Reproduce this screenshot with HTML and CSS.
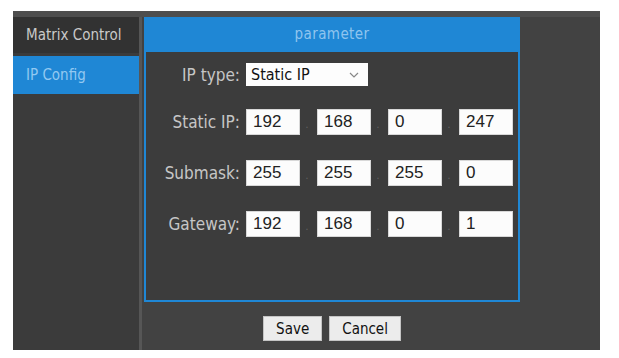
FILE: index.html
```html
<!DOCTYPE html>
<html>
    <head>
        <meta charset="UTF-8" />
        <meta name="viewport" content="width=device-width, initial-scale=1.0" />
        <title>IP Config</title>
        <link rel="stylesheet" href="styles.css">
    </head>
    <body>
        <div class="app">
            <div class="sidebar">
                <div class="navItem">Matrix Control</div>
                <div class="navItem active">IP Config</div>
            </div>
            <div class="divider"></div>
            <div class="main">
                <div class="panel">
                    <div class="panelHead">parameter</div>
                    <div class="panelBody">
                        <div class="row">
                            <label>IP type:</label>
                            <div class="select">
                                <span>Static IP</span>
                                <svg width="10" height="6" viewBox="0 0 10 6"><path d="M1 1 L5 5 L9 1" fill="none" stroke="#888" stroke-width="1.2"/></svg>
                            </div>
                        </div>
                        <div class="row ipRow">
                            <label>Static IP:</label>
                            <input value="192" /><span class="dot">.</span>
                            <input value="168" /><span class="dot">.</span>
                            <input value="0" /><span class="dot">.</span>
                            <input value="247" />
                        </div>
                        <div class="row ipRow">
                            <label>Submask:</label>
                            <input value="255" /><span class="dot">.</span>
                            <input value="255" /><span class="dot">.</span>
                            <input value="255" /><span class="dot">.</span>
                            <input value="0" />
                        </div>
                        <div class="row ipRow">
                            <label>Gateway:</label>
                            <input value="192" /><span class="dot">.</span>
                            <input value="168" /><span class="dot">.</span>
                            <input value="0" /><span class="dot">.</span>
                            <input value="1" />
                        </div>
                    </div>
                </div>
                <div class="actions">
                    <button>Save</button>
                    <button>Cancel</button>
                </div>
            </div>
        </div>
    </body>
</html>
```

FILE: styles.css
```css
*,
*::before,
*::after {
    box-sizing: border-box;
}

html,
body {
    margin: 0;
    padding: 0;
    background: #fff;
    font-family: "DejaVu Sans Condensed", "DejaVu Sans", sans-serif;
}

/* 外框 */
.app {
    display: flex;
    margin: 11px 0 0 13px;
    width: 587px;
    height: 339px;
    background: #424242;
    border-top: 6px solid #4e4e4e;
}

/* 左側選單 */
.sidebar {
    width: 126px;
    background: #3b3b3b;
}

.navItem {
    height: 36px;
    line-height: 36px;
    padding-left: 13px;
    font-size: 15px;
    color: #c9c9c9;
    background: #323232;
    margin-bottom: 3px;
}

.navItem.active {
    height: 38px;
    line-height: 38px;
    background: #1f87d5;
    color: #93c9f1;
}

.divider {
    width: 3px;
    background: #565656;
}

/* 主區域 */
.main {
    display: flex;
    flex-direction: column;
    padding-left: 2px;
}

.panel {
    width: 376px;
    height: 285px;
    display: flex;
    flex-direction: column;
}

.panelHead {
    height: 35px;
    line-height: 35px;
    background: #1f87d5;
    color: #8fc4ee;
    font-size: 15px;
    letter-spacing: 0.4px;
    text-align: center;
}

.panelBody {
    flex: 1;
    background: #3c3c3c;
    border: 2px solid #1f87d5;
    border-top: none;
    padding-top: 11px;
}

.row {
    display: flex;
    align-items: center;
    margin-bottom: 23px;
}

.ipRow {
    margin-bottom: 25px;
}

.row label {
    width: 97px;
    text-align: right;
    padding-right: 3px;
    color: #c6c6c6;
    font-size: 17px;
}

.select {
    display: flex;
    align-items: center;
    justify-content: space-between;
    width: 122px;
    height: 23px;
    margin-left: 3px;
    padding: 0 9px 0 5px;
    background: #fdfdfd;
    color: #111;
    font-size: 16px;
}

.row input {
    width: 54px;
    height: 26px;
    padding: 0 0 0 6px;
    border: 1px solid #d8d8d8;
    background: #fcfcfc;
    font-family: "Liberation Sans", Arial, sans-serif;
    font-size: 17px;
    color: #222;
    margin-left: 3px;
}

.dot {
    width: 14px;
    text-align: center;
    color: #666;
    font-size: 10px;
    align-self: flex-end;
    padding-bottom: 5px;
}

/* 按鈕 */
.actions {
    display: flex;
    justify-content: center;
    gap: 7px;
    width: 376px;
    margin-top: 14px;
}

button {
    height: 25px;
    padding: 0 12px;
    font-family: "DejaVu Sans Condensed", "DejaVu Sans", sans-serif;
    font-size: 15px;
    color: #111;
    background: #ececec;
    border: 1px solid #c4c4c4;
    border-radius: 0;
}
```
